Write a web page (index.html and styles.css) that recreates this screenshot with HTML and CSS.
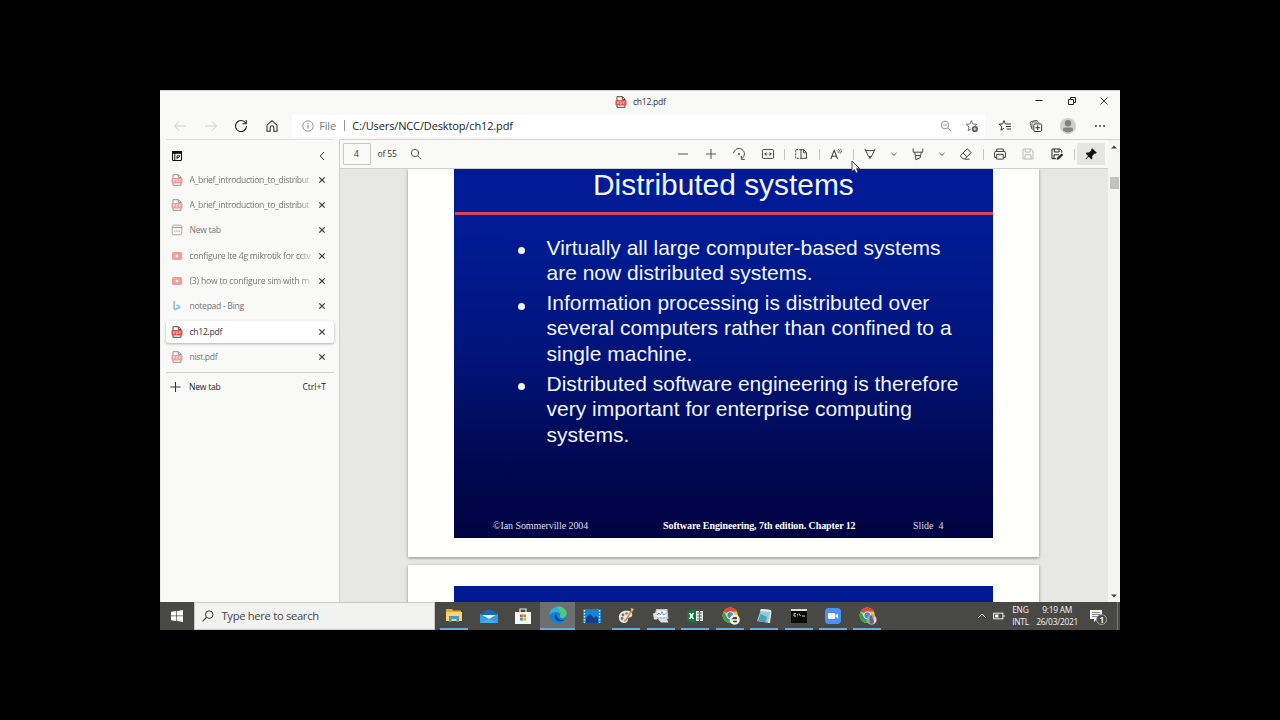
FILE: index.html
```html
<!DOCTYPE html>
<html lang="en">
<head>
<meta charset="utf-8">
<title>ch12.pdf</title>
<link rel="stylesheet" href="styles.css">
</head>
<body>
<svg class="defs" aria-hidden="true">
  <symbol id="pdf" viewBox="0 0 12 12"><path d="M2 4V.7h5.500l2.500 2.500V4M7.300.8v2.600H10M2 9v2.300h8V9" fill="none" stroke="#3b3030" stroke-width=".9"/><rect x=".5" y="4" width="11" height="5.600" rx="1" fill="#e05550"/><path d="M2.600 8V5.600h1.100v1.300H2.600M5.300 8V5.600h1l.5.7v1l-.5.7zM8.400 8V5.600h1.400M8.400 6.800h1.100" fill="none" stroke="#fff" stroke-width=".5"/></symbol>
  <symbol id="x" viewBox="0 0 8 8"><path d="M1.300 1.300l5.400 5.400M6.700 1.300L1.300 6.700" stroke="#333" stroke-width="1.150"/></symbol>
  <symbol id="yt" viewBox="0 0 12 12"><rect x=".8" y="2" width="10.400" height="8" rx="1.800" fill="#ee5550"/><path d="M4.800 4.200v3.600L8 6z" fill="#fff"/></symbol>
  <symbol id="chev" viewBox="0 0 8 8"><path d="M1.500 3L4 5.400 6.500 3" fill="none" stroke="#555" stroke-width=".9"/></symbol>
  <symbol id="chrome" viewBox="0 0 16 16"><circle cx="8" cy="8" r="7.500" fill="#f3c433"/><path d="M8 8L1.500 4.200A7.500 7.500 0 0 1 14.500 4.300H8z" fill="#dd4b3d"/><path d="M1.500 4.300A7.500 7.500 0 0 0 8 15.500l3-5.200L8 8 5 9.700z" fill="#2fa35a"/><circle cx="8" cy="8" r="3.600" fill="#fff"/><circle cx="8" cy="8" r="2.800" fill="#4586e8"/></symbol>
</svg>

<div class="window">
  <header class="titlebar">
    <div class="title"><svg class="i12"><use href="#pdf"/></svg><span>ch12.pdf</span></div>
    <div class="controls">
      <svg viewBox="0 0 12 12"><path d="M2.500 5.500h7" stroke="#222"/></svg>
      <svg viewBox="0 0 12 12"><path d="M2.500 4.500h5v5h-5zM4.500 4.500v-2h5v5h-2" fill="none" stroke="#222"/></svg>
      <svg viewBox="0 0 12 12"><path d="M2.600 2.600l6.800 6.800M9.400 2.600L2.600 9.400" stroke="#222" stroke-width=".9"/></svg>
    </div>
  </header>

  <nav class="navbar">
    <svg class="nav" viewBox="0 0 16 16"><path d="M14 8H2.800M7 3.500L2.500 8 7 12.500" fill="none" stroke="#ccc"/></svg>
    <svg class="nav" viewBox="0 0 16 16"><path d="M2 8h11.200M9 3.500L13.500 8 9 12.500" fill="none" stroke="#ccc"/></svg>
    <svg class="nav" viewBox="0 0 16 16"><path d="M12.600 5A5.500 5.500 0 1 0 13.500 8" fill="none" stroke="#222" stroke-width="1.100"/><path d="M13.200 2v3.700H9.600" fill="none" stroke="#222" stroke-width="1.100"/></svg>
    <svg class="nav" viewBox="0 0 16 16"><path d="M3 7.200L8 2.700l5 4.500v6H9.800V9.500a1.800 1.800 0 0 0-3.600 0v3.700H3z" fill="none" stroke="#333" stroke-width="1.100"/></svg>
    <div class="address">
      <svg class="info" viewBox="0 0 12 12"><circle cx="6" cy="6" r="5.200" fill="none" stroke="#777" stroke-width=".8"/><path d="M6 5.200v3.500M6 3v1.200" stroke="#777"/></svg>
      <span class="scheme">File</span><i class="bar"></i><span class="url">C:/Users/NCC/Desktop/ch12.pdf</span>
      <svg class="zoomout" viewBox="0 0 14 14"><circle cx="6" cy="6" r="3.800" fill="none" stroke="#888" stroke-width=".9"/><path d="M4.200 6h3.600M8.800 8.800l3.400 3.400" stroke="#888" stroke-width=".9"/></svg>
      <svg class="star" viewBox="0 0 14 14"><path d="M6.400 1.500L7.900 5l3.900.3-2.900 2.500M6.400 1.500L4.900 5 1 5.300l3 2.600-.9 3.800 2.800-1.700" fill="none" stroke="#666" stroke-width=".9"/><circle cx="9.900" cy="10" r="3.100" fill="#555"/><path d="M8.200 10h3.400M9.900 8.300v3.400" stroke="#fff" stroke-width=".8"/></svg>
    </div>
    <div class="tools">
      <svg viewBox="0 0 14 14"><path d="M9 5L7.400 4.900 6 1.600 4.600 4.900 1.200 5.200l2.600 2.300-.9 3.700L6 9.300M9 5h4M8 7.500h5M8.600 10H13" fill="none" stroke="#333" stroke-width="1"/></svg>
      <svg viewBox="0 0 14 14"><path d="M2.500 9.400L1.300 4.200Q1 3 2.200 2.600L7 1.400q1.300-.3 1.700 1.100" fill="none" stroke="#333" stroke-width=".8"/><path d="M4 10.500q-1 0-1-1V4.200q0-1.200 1.200-1.200h4.600q1 0 1 1" fill="none" stroke="#333" stroke-width=".7"/><rect x="4.800" y="4.900" width="7.800" height="7.600" rx="1.300" fill="none" stroke="#333"/><path d="M8.700 6.400v4.600M6.400 8.700H11" stroke="#333"/></svg>
      <svg class="avatar" viewBox="0 0 16 16"><circle cx="8" cy="8" r="8" fill="#cfcfcc"/><circle cx="8" cy="5.200" r="3.200" fill="#828282"/><path d="M2.800 12q0-2.400 2.500-2.400h5.400q2.500 0 2.500 2.400a6.800 6.800 0 0 1-10.400 0" fill="#828282"/></svg>
      <svg viewBox="0 0 14 14"><g fill="#333"><circle cx="3" cy="7" r=".9"/><circle cx="7" cy="7" r=".9"/><circle cx="11" cy="7" r=".9"/></g></svg>
    </div>
  </nav>

  <div class="content">
    <aside class="tabs">
      <div class="tabs-head">
        <svg class="i12" viewBox="0 0 12 12"><rect x="1.500" y="1.500" width="9" height="9" rx="1" fill="none" stroke="#111" stroke-width="1.100"/><path d="M1 1h10v2.800H1z" fill="#111"/><path d="M3.800 3v8" stroke="#111"/><path d="M6 9V5.800h3L7.800 7.500H6" stroke="#111" fill="none" stroke-width=".9"/></svg>
        <svg class="collapse" viewBox="0 0 8 12"><path d="M6 2L2.200 6 6 10" fill="none" stroke="#333"/></svg>
      </div>
      <div class="tab dim"><svg class="i12"><use href="#pdf"/></svg><span class="fade t1">A_brief_introduction_to_distribut</span><svg class="close"><use href="#x"/></svg></div>
      <div class="tab dim"><svg class="i12"><use href="#pdf"/></svg><span class="fade t1">A_brief_introduction_to_distribut</span><svg class="close"><use href="#x"/></svg></div>
      <div class="tab dim"><svg class="i12" viewBox="0 0 12 12"><rect x="1.200" y="1.200" width="9.600" height="9.600" rx="1.500" fill="none" stroke="#555" stroke-width=".9"/><path d="M1.200 3.600h9.600M3 7h1.400M5.300 7h1.400M7.600 7H9" stroke="#444"/></svg><span>New tab</span><svg class="close"><use href="#x"/></svg></div>
      <div class="tab dim"><svg class="i12"><use href="#yt"/></svg><span class="fade t2">configure lte 4g mikrotik for cctv</span><svg class="close"><use href="#x"/></svg></div>
      <div class="tab dim"><svg class="i12"><use href="#yt"/></svg><span class="fade t3">(3) how to configure sim with m</span><svg class="close"><use href="#x"/></svg></div>
      <div class="tab dim"><svg class="i12" viewBox="0 0 12 12"><path d="M3.200 1v8.200M3.200 9.800l5.200-2.200c.6-1-1.200-2.200-2.800-2.800" fill="none" stroke="#3a9fe0" stroke-width="1.900"/></svg><span>notepad - Bing</span><svg class="close"><use href="#x"/></svg></div>
      <div class="tab active"><svg class="i12"><use href="#pdf"/></svg><span>ch12.pdf</span><svg class="close"><use href="#x"/></svg></div>
      <div class="tab dim"><svg class="i12"><use href="#pdf"/></svg><span>nist.pdf</span><svg class="close"><use href="#x"/></svg></div>
      <div class="newtab"><svg class="i12" viewBox="0 0 12 12"><path d="M.5 6h10M5.500 1v10" stroke="#333"/></svg><span>New tab</span><span class="key">Ctrl+T</span></div>
    </aside>

    <main class="viewer">
      <div class="pane">
        <div class="toolbar">
          <div class="pagebox">4</div><span class="of">of 55</span>
          <svg class="find" viewBox="0 0 12 12"><circle cx="5" cy="5" r="3.700" fill="none" stroke="#555"/><path d="M7.700 7.700l3.500 3.500" stroke="#555"/></svg>
          <div class="actions">
            <svg viewBox="0 0 14 14"><path d="M2 7h10" stroke="#555"/></svg>
            <svg viewBox="0 0 14 14"><path d="M2 7h10M7 2v10" stroke="#555"/></svg>
            <svg viewBox="0 0 14 14"><path d="M1.600 6.200A5.400 5.400 0 1 1 9.800 11.500M9.300 8.700v3.600h3.500" fill="none" stroke="#444"/><circle cx="7" cy="7" r="1" fill="#444"/></svg>
            <svg viewBox="0 0 14 14"><rect x="1.400" y="2.600" width="11.200" height="8.800" rx="1" fill="none" stroke="#444"/><path d="M5.500 5v4L3 7zM8.500 5v4L11 7z" fill="#444"/><path d="M4.500 7h5" stroke="#999" stroke-width=".6"/></svg>
            <i></i>
            <svg viewBox="0 0 14 14"><path d="M7 2.700H1.700v8.600H7" fill="none" stroke="#444" stroke-dasharray="2 1"/><path d="M7 2.700h2.800l2.700 2.800v5.800H7zM9.600 2.800v3h2.800" fill="none" stroke="#444"/></svg>
            <i></i>
            <svg viewBox="0 0 14 14"><path d="M1.800 12L5.200 3.400 8.600 12M3 9.200h4.400" fill="none" stroke="#444" stroke-width="1.100"/><path d="M8.200 3.600q1.200.7 1.200 2.600M9.200 2q2.100 1.200 2.200 4.800M11 1.500q1.600 1.600 1.800 4" fill="none" stroke="#555" stroke-width=".75"/></svg>
            <i></i>
            <svg viewBox="0 0 14 14"><path d="M1.800 1.800L5.700 9.700h2.600l3.900-7.900M2.800 3.600h8.400" fill="none" stroke="#444"/><path d="M5.800 9.800h2.400L7 12.600z" fill="#444"/></svg>
            <svg class="small"><use href="#chev"/></svg>
            <svg viewBox="0 0 14 14"><path d="M2.200 1.500v3.700h9.600V1.500M3.600 5.200l.8 3.300h5.200l.8-3.300M4.700 8.600v4l4.600-1.900v-2" fill="none" stroke="#444"/></svg>
            <svg class="small"><use href="#chev"/></svg>
            <svg viewBox="0 0 14 14"><path d="M1.700 8.300L8.200 1.800l4 3.700-6.500 6.500H4.200L1.700 9.500zM4 6l4 3.800M6 12.200h4.500" fill="none" stroke="#444"/></svg>
            <i></i>
            <svg viewBox="0 0 14 14"><path d="M3.800 4.400V2h6.400v2.400M3.600 10.300H1.500V5.800q0-1.300 1.300-1.300h8.400q1.300 0 1.300 1.300v4.500h-2.100M3.700 7.300h6.600v4.800H3.700z" fill="none" stroke="#444"/></svg>
            <svg viewBox="0 0 14 14"><path d="M2 2h8l2 2v8H2zM4.400 2v3h4.800V2M4 12V7.800h6V12" fill="none" stroke="#bbb"/></svg>
            <svg viewBox="0 0 14 14"><path d="M6.200 11.700H2V2h8l1.800 1.800v2M4.300 2v3h4.800V2M4 11.700V7.800h5" fill="none" stroke="#222"/><path d="M6.600 12.800l.7-2.200 4.400-4.200 1.500 1.500-4.300 4.300z" fill="#222"/></svg>
            <i></i>
            <div class="pin"><svg viewBox="0 0 14 14"><path d="M8.200 1.200l4.600 4.500-1.200 1-1-.1-2.400 2.500.2 2.200-1 1.100-2.700-2.700L2 12.300l-.4-.5L4.200 9 1.500 6.500l1.100-1 2.400.1 2.400-2.300-.2-1.100z" fill="#111"/></svg></div>
          </div>
        </div>
        <div class="pages">
          <section class="page first">
            <div class="slide">
              <h1>Distributed systems</h1>
              <ul>
                <li>Virtually all large computer-based systems<br>are now distributed systems.</li>
                <li>Information processing is distributed over<br>several computers rather than confined to a<br>single machine.</li>
                <li>Distributed software engineering is therefore<br>very important for enterprise computing<br>systems.</li>
              </ul>
              <footer><span>©Ian Sommerville 2004</span><b>Software Engineering, 7th edition. Chapter 12</b><span class="number">Slide&nbsp; 4</span></footer>
            </div>
          </section>
          <section class="page next"><div class="slide"></div></section>
        </div>
      </div>
      <div class="scroll"><svg viewBox="0 0 6 4"><path d="M0 3.500L3 .5l3 3z" fill="#444"/></svg><b></b><svg viewBox="0 0 6 4"><path d="M0 .5l3 3 3-3z" fill="#444"/></svg></div>
      <svg class="cursor" viewBox="0 0 10 14"><path d="M1 1v10.500l2.400-2 1.700 3.600 2-.9-1.600-3.500h3.200z" fill="#fff" stroke="#333" stroke-width=".9"/></svg>
    </main>
  </div>

  <footer class="taskbar">
    <div class="start"><svg viewBox="0 0 12 12"><path d="M0 1.700L5.300 1v4.600H0zM6 .9L12 0v5.600H6zM0 6.300h5.300V11L0 10.300zM6 6.300h6V12l-6-.9z" fill="#fff"/></svg></div>
    <div class="search"><svg viewBox="0 0 12 12"><circle cx="7.200" cy="4.600" r="3.800" fill="none" stroke="#333"/><path d="M4.500 7.300L.6 11.300" stroke="#333" stroke-width="1.100"/></svg><span>Type here to search</span></div>
    <div class="apps">
      <div class="run"><svg viewBox="0 0 16 16"><path d="M0 1h6l1 1.500h8V13H0z" fill="#e8a82e"/><path d="M0 4h16v9H0z" fill="#fbd56b"/><path d="M3 8h10v6h-2.600v-3H5.600v3H3z" fill="#4398d5"/></svg></div>
      <div><svg class="mail" viewBox="0 0 18 16"><path d="M0 6l9-5 9 5v9H0z" fill="#1769b5"/><path d="M0 6l9 5 9-5v9H0z" fill="#2f9fe5"/><path d="M2 7h14l-7 4z" fill="#eef4f8"/><path d="M0 15l9-4.500L18 15z" fill="#43aceb"/></svg></div>
      <div><svg viewBox="0 0 16 16"><path d="M5 4V1h6v3" fill="none" stroke="#eee" stroke-width="1.200"/><path d="M0 4h16v12H0z" fill="#f7f7f4"/><path d="M5 6.500h2.800v2.800H5z" fill="#e64a2c"/><path d="M8.300 6.500h2.800v2.800H8.300z" fill="#78b52d"/><path d="M5 9.800h2.800v2.800H5z" fill="#2c9fe2"/><path d="M8.300 9.800h2.800v2.800H8.300z" fill="#f5b51b"/></svg></div>
      <div class="current"><svg class="edge" viewBox="0 0 18 18"><circle cx="9" cy="9" r="8.600" fill="#1680d2"/><path d="M.5 9C.5 4 4.400.4 9 .4s8.600 3.300 8.600 7.200c0 3-2.300 4.200-4.300 4.200-2.200 0-3.200-.9-2.500-1.800.8-1.300 0-3.200-2-3.700C5.300 5.500 2.200 7 .5 9z" fill="#30b4cc"/><path d="M8 .5c5-.7 9.600 2.800 9.600 7.100 0 3-2.300 4.200-4.300 4.200-2.200 0-3.200-.9-2.500-1.800C12.500 6 11.500 3 8 .5z" fill="#54c979"/><path d="M7 7.500c-3 2.500-1 8 4 8 2 0 3.700-.6 5-1.700-3.500 1-8-.8-9-6.300z" fill="#0b4c99"/></svg></div>
      <div><svg class="film" viewBox="0 0 18 14"><path d="M0 0h18v14H0z" fill="#1583cf"/><path d="M3 14V9l4-4 4 4 2-2 2 2v5z" fill="#123f86"/><path d="M1.500 1v13M16.500 1v13" stroke="#d9eefb" stroke-width="1.400" stroke-dasharray="1.500 1.500"/></svg></div>
      <div class="run"><svg viewBox="0 0 16 16"><path d="M1 8C2 3 7 2 11 3s4 5 2 6-3 0-3 2-1 4-4 4-6-3-5-7z" fill="#e6e9ee"/><circle cx="5" cy="7" r="1.400" fill="#d24c3e"/><circle cx="8.500" cy="5.500" r="1.300" fill="#4a9d50"/><circle cx="4" cy="10.500" r="1.400" fill="#3b78c5"/><circle cx="7" cy="12.500" r="1.300" fill="#d9a52a"/><path d="M8 12l6-10" stroke="#d88a36" stroke-width="1.500"/><path d="M12.500 0l3.500 1-2 3z" fill="#f0bd67"/></svg></div>
      <div class="run"><svg viewBox="0 0 16 16"><path d="M3 1h11.500l1 10H1z" fill="#c3cacb"/><path d="M4 2.500h9l.8 6.500H3.300z" fill="#f2f7f8"/><path d="M0 5.500l3-1 1 7H1zM5 11h9l1.500 3.500H8z" fill="#dfe2e1"/><path d="M4 7l2-2 1.500 2L9 3.500 10.500 7 13 5.500" fill="none" stroke="#6b8793" stroke-width=".8"/></svg></div>
      <div class="run"><svg viewBox="0 0 16 16"><path d="M8 3h8v10H8z" fill="#f0f6f2"/><path d="M10 5h5M10 8h5M10 11h5M12.500 3v10" stroke="#217346" stroke-width=".9"/><path d="M0 2l9-1.500v15L0 14z" fill="#1d7044"/><path d="M2.500 5l4 6M6.500 5l-4 6" stroke="#fff" stroke-width="1.400"/></svg></div>
      <div class="run"><svg class="ch" viewBox="0 0 17 17"><use href="#chrome" width="15.500" height="15.500"/><circle cx="12" cy="12" r="4.800" fill="#f1f1ed"/><path d="M9 11.500l2-2h3v2zM10 13h4v1.500h-3z" fill="#493c35"/></svg></div>
      <div class="run"><svg viewBox="0 0 16 16"><path d="M5 1l10 1-2 13-12-2z" fill="#8dcbd7"/><path d="M5 1l10 1-.4 2L4 3z" fill="#e4efef"/><path d="M12 15l2.500-12 1 .5L14 15z" fill="#e9ecea"/><path d="M4.500 6L11 9l-1.500 5.500-7.500-1.500z" fill="#4aa2b4"/></svg></div>
      <div class="run"><svg viewBox="0 0 16 14"><path d="M0 0h16v14H0z" fill="#080808"/><path d="M0 0h16v2H0z" fill="#ddd"/><path d="M5 4.500H3v2.500h2M6.500 5v.8M6.500 6.500v.8M8 4.500l1.500 2.500M11 7h3" stroke="#ddd" stroke-width=".9" fill="none"/></svg></div>
      <div class="run"><svg viewBox="0 0 16 16"><rect width="16" height="16" rx="4" fill="#4c91f5"/><rect x="3" y="5" width="7.200" height="6" rx="1.200" fill="#fff"/><path d="M10.800 7.200L13 5.500v5l-2.200-1.700z" fill="#fff"/></svg></div>
      <div class="run"><svg class="ch" viewBox="0 0 17 17"><use href="#chrome" width="15.500" height="15.500"/><circle cx="12" cy="12" r="4.800" fill="#a5a5ac"/><path d="M10 9l2-1 1 3 2 3-3 2-2-1z" fill="#62667c"/><path d="M14 8.500q3 2 2 5l-2 2z" fill="#e7d2c6"/></svg></div>
    </div>
    <div class="tray">
      <svg class="up" viewBox="0 0 10 10"><path d="M1 7l4-4 4 4" fill="none" stroke="#eee"/></svg>
      <svg class="battery" viewBox="0 0 12 8"><rect x=".6" y="1.200" width="9.300" height="5.600" fill="none" stroke="#eee"/><path d="M2 2.500h3.500v3H2zM10.500 3h1v2h-1z" fill="#eee"/></svg>
      <div class="lang">ENG<br>INTL</div>
      <div class="clock"><span>9:19 AM</span><br>26/03/2021</div>
      <div class="notify"><svg viewBox="0 0 12 12"><path d="M0 0h12v9H7l-3 3V9H0z" fill="#f5f5f5"/><path d="M2 2.500h8M2 4.500h8M2 6.500h6" stroke="#666" stroke-width=".8"/></svg><b>1</b></div>
      <i class="desk"></i>
    </div>
  </footer>
</div>
</body>
</html>
```
FILE: styles.css
```css
* { box-sizing: border-box; }
body { margin: 0; width: 1280px; height: 720px; background: #000; display: flex; align-items: center; justify-content: center; overflow: hidden; font-family: "Open Sans", "Noto Sans", sans-serif; color: #333; }
svg { display: block; flex: none; }
.defs { position: absolute; width: 0; height: 0; }
.i12 { width: 12px; height: 12px; }
.window { width: 960px; height: 540px; display: flex; flex-direction: column; background: #f9f9f7; overflow: hidden; }

.titlebar { height: 24px; border-top: 1px solid #d2d2d0; display: grid; grid-template-columns: 455px 1fr 97px; align-items: center; padding-bottom: 3px; }
.title { grid-column: 2; display: flex; align-items: center; gap: 6px; font-size: 8.600px; letter-spacing: -.3px; padding-top: 1px; }
.controls { display: flex; gap: 20.500px; padding-left: 10px; height: 18px; align-items: center; }
.controls svg { width: 12px; height: 12px; }

.navbar { height: 25px; display: flex; align-items: center; padding: 0 0 2px 12px; }
.nav { width: 16px; height: 16px; margin-right: 14.700px; }
.address { width: 693px; height: 22px; margin-left: -2.500px; background: #fff; display: flex; align-items: center; font-size: 11px; }
.info { width: 12px; height: 12px; margin-left: 9.500px; }
.scheme { width: 25px; margin-left: 5.500px; color: #777; letter-spacing: -.2px; }
.bar { width: 1px; height: 11px; background: #999; }
.url { margin-left: 7px; letter-spacing: -.130px; color: #222; white-space: nowrap; }
.zoomout { width: 14px; height: 14px; margin-left: auto; }
.star { width: 14px; height: 14px; margin: 0 6.500px 0 12px; }
.tools { flex: 1; display: flex; align-items: center; padding-left: 13px; gap: 17px; }
.tools svg { width: 14px; height: 14px; }
.tools .avatar { width: 16px; height: 16px; }

.content { height: 463px; display: flex; }
.tabs { width: 179px; padding: 0 5px; border-left: 1px solid #ececea; font-size: 8.600px; letter-spacing: -.3px; }
.tabs-head { height: 29.500px; border-top: 1px solid #dededc; padding: 4px 8px 0 5px; display: flex; justify-content: space-between; align-items: center; }
.collapse { width: 8px; height: 12px; }
.tab { height: 22.350px; margin-bottom: 3px; padding: 0 8.500px 0 4.500px; display: flex; align-items: center; border-radius: 3px; white-space: nowrap; }
.tab .i12 { margin-right: 7px; }
.tab span { flex: 1; color: #333; }
.dim .i12 { opacity: .55; }
.tab.dim span { color: #777; }
.tab .fade { flex: 0 0 124px; margin-right: auto; -webkit-mask-image: linear-gradient(to right, #000 110px, transparent 125px); mask-image: linear-gradient(to right, #000 110px, transparent 125px); }
.tab .t1 { letter-spacing: -.330px; }
.tab .t2 { letter-spacing: -.230px; }
.tab .t3 { letter-spacing: -.200px; }
.close { width: 8px; height: 8px; }
.active { background: #fff; box-shadow: 0 1px 3px rgba(0,0,0,.3); }
.newtab { margin-top: 3.700px; border-top: 1px solid #d2d2d0; height: 29px; padding: 0 8px 0 3.500px; display: flex; align-items: center; color: #222; }
.newtab span { margin-left: 7.500px; letter-spacing: -.250px; }
.newtab .key { margin-left: auto; letter-spacing: -.050px; }

.viewer { position: relative; flex: 1; display: flex; border-left: 1px solid #cfcfcd; border-top: 1px solid #d2d2d0; }
.pane { width: 768px; display: flex; flex-direction: column; }
.toolbar { height: 29px; border-bottom: 1px solid #d0d0ce; display: flex; align-items: center; font-size: 8.600px; letter-spacing: -.150px; }
.pagebox { width: 28px; height: 22px; margin-left: 2.500px; border: 1px solid #c8c8c6; border-radius: 1px; display: flex; align-items: center; justify-content: center; }
.of { width: 34px; padding-left: 7px; }
.find { width: 12px; height: 12px; margin-left: 5.500px; }
.actions { margin-left: auto; margin-right: 3px; height: 100%; display: grid; grid-template-columns: 28px 28px 28px 29px 5px 28px 8px 26px 8px 26px 22px 26px 22px 26px 8px 26px 30px 28px 6px 28px; align-items: center; justify-items: center; }
.actions svg { width: 14px; height: 14px; }
.actions svg.small { width: 8px; height: 8px; }
.actions i { width: 1px; height: 11px; background: #c4c4c2; }
.pin { width: 28px; height: 22px; background: #e5e5e3; display: flex; align-items: center; justify-content: center; }
.pages { flex: 1; background: #e7e7e5; padding-left: 68px; overflow: hidden; }
.page { width: 631px; background: #fffffd; box-shadow: 0 1px 3px rgba(0,0,0,.4); padding-left: 46px; }
.page.first { height: 388px; }
.page.next { margin-top: 8px; height: 50px; padding-top: 21px; }
.slide { width: 539.400px; height: 369px; background: linear-gradient(#001b96 0, #001b92 20%, #00147a 50%, #000b5a 72%, #000548 90%, #000444); color: #f2f6ff; font-family: "Liberation Sans", Arial, sans-serif; }
.next .slide { height: 40px; background: #001a93; }
h1 { margin: 0 0 0 1px; height: 46px; border-bottom: 3px solid #d84458; padding-left: 138px; font-size: 29.900px; line-height: 31px; font-weight: 400; white-space: nowrap; }
ul { margin: 0; padding: 19.500px 0 0 92.500px; list-style: none; font-size: 21px; line-height: 25.400px; white-space: nowrap; height: 302px; }
li { display: block; margin-bottom: 4.700px; }
li::before { content: ""; float: left; width: 7px; height: 7px; margin: 12.500px 0 0 -28.500px; border-radius: 50%; background: #f2f6ff; }
.slide footer { display: grid; grid-template-columns: 170px 250px 1fr; padding-left: 39px; font: 10px/18px "Liberation Serif", "Times New Roman", serif; color: #dde; white-space: nowrap; letter-spacing: -.090px; }
.slide footer b { color: #fff; }
.slide footer .number { letter-spacing: 0; }

.scroll { flex: 1; background: #f5f5f3; display: flex; flex-direction: column; align-items: center; padding: 5px 0 4px; }
.scroll svg { width: 6px; height: 4px; }
.scroll b { width: 9px; height: 12px; background: #c2c2c0; margin: 28px 0 auto; }
.cursor { position: absolute; left: 511px; top: 20px; width: 10px; height: 14px; }

.taskbar { height: 28px; background: #484845; display: flex; color: #f2f2f2; }
.start { width: 34px; display: flex; align-items: center; justify-content: center; }
.start svg { width: 12px; height: 12px; }
.search { width: 241px; background: #f2f2f1; border: 1px solid #c9c9c7; display: flex; align-items: center; gap: 7.500px; padding: 0 0 1px 7px; font-size: 11px; letter-spacing: -.080px; color: #444; }
.search span { font-size: 11.200px; letter-spacing: -.600px; letter-spacing: -.300px; }
.search svg { width: 12px; height: 12px; }
.apps { display: grid; grid-template-columns: repeat(13, 34.450px); margin-left: 2px; }
.apps > div { display: flex; align-items: center; justify-content: center; }
.apps svg { width: 16px; height: 16px; }
.apps svg.edge { width: 18px; height: 18px; }
.apps svg.mail, .apps svg.film { width: 18px; }
.apps svg.ch { width: 18px; height: 18px; margin-left: 2px; }
.run { background: linear-gradient(#68a9de, #68a9de) center bottom / 28px 2px no-repeat; }
.current { background: #6d706f; border-bottom: 2px solid #68a9de; }
.tray { flex: 1; display: flex; align-items: center; font-size: 8.400px; line-height: 12px; letter-spacing: -.250px; white-space: nowrap; }
.up { width: 10px; height: 10px; margin-left: 92.500px; }
.battery { width: 12px; height: 8px; margin-left: 6px; }
.lang { width: 19px; margin-left: 7px; }
.clock { width: 52px; text-align: center; }
.notify { position: relative; width: 12px; height: 12px; margin-left: 7px; }
.notify svg { width: 12px; height: 12px; }
.notify b { position: absolute; left: 6px; top: 4px; width: 11px; height: 11px; border: 1px solid #aaa; border-radius: 50%; background: #484845; font-size: 8px; line-height: 9px; text-align: center; }
.desk { width: 1px; height: 28px; background: #777; margin-left: auto; margin-right: 2px; }
```
